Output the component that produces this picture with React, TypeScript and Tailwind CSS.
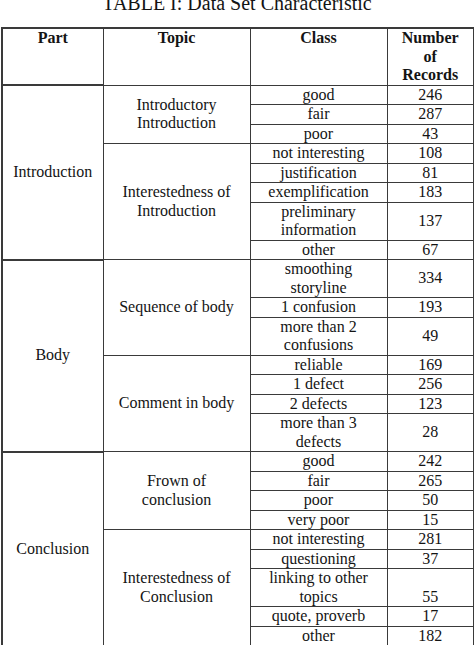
import React from 'react'

interface Row {
  part?: { label: string; span: number }
  topic?: { label: React.ReactNode; span: number }
  cls: React.ReactNode
  count: string
  bottom?: boolean
}

const rows: Row[] = [
  { part: { label: 'Introduction', span: 8 }, topic: { label: <>Introductory<br />Introduction</>, span: 3 }, cls: 'good', count: '246' },
  { cls: 'fair', count: '287' },
  { cls: 'poor', count: '43' },
  { topic: { label: <>Interestedness of<br />Introduction</>, span: 5 }, cls: 'not interesting', count: '108' },
  { cls: 'justification', count: '81' },
  { cls: 'exemplification', count: '183' },
  { cls: <>preliminary<br />information</>, count: '137' },
  { cls: 'other', count: '67' },
  { part: { label: 'Body', span: 7 }, topic: { label: 'Sequence of body', span: 3 }, cls: <>smoothing<br />storyline</>, count: '334' },
  { cls: '1 confusion', count: '193' },
  { cls: <>more than 2<br />confusions</>, count: '49' },
  { topic: { label: 'Comment in body', span: 4 }, cls: 'reliable', count: '169' },
  { cls: '1 defect', count: '256' },
  { cls: '2 defects', count: '123' },
  { cls: <>more than 3<br />defects</>, count: '28' },
  { part: { label: 'Conclusion', span: 9 }, topic: { label: <>Frown of<br />conclusion</>, span: 4 }, cls: 'good', count: '242' },
  { cls: 'fair', count: '265' },
  { cls: 'poor', count: '50' },
  { cls: 'very poor', count: '15' },
  { topic: { label: <>Interestedness of<br />Conclusion</>, span: 5 }, cls: 'not interesting', count: '281' },
  { cls: 'questioning', count: '37' },
  { cls: <>linking to other<br />topics</>, count: '55', bottom: true },
  { cls: 'quote, proverb', count: '17' },
  { cls: 'other', count: '182' },
]

const serif = { fontFamily: '"Liberation Serif", "Times New Roman", serif' }
const cell = 'border border-[#3a3a3a] p-0 text-center align-middle font-[inherit]'

export default function App() {
  return (
    <div className="w-[474px] h-[645px] overflow-hidden bg-white text-[#141414]" style={serif}>
      <div className="-mt-[7px] mb-[14px] text-center text-[20px] leading-[20px]">
        TABLE I: Data Set Characteristic
      </div>
      <table
        className="ml-[1px] w-[472px] border-collapse border-2 border-[#3a3a3a] text-[16px] leading-[18.5px] table-fixed text-[#141414]"
        style={serif}
      >
        <colgroup>
          <col className="w-[101px]" />
          <col className="w-[147px]" />
          <col className="w-[137px]" />
          <col className="w-[87px]" />
        </colgroup>
        <thead>
          <tr className="font-bold">
            <th className={cell + ' align-top'}>Part</th>
            <th className={cell + ' align-top'}>Topic</th>
            <th className={cell + ' align-top'}>Class</th>
            <th className={cell + ' align-top'}>
              Number<br />of<br />Records
            </th>
          </tr>
        </thead>
        <tbody>
          {rows.map((r, i) => (
            <tr key={i}>
              {r.part && (
                <td rowSpan={r.part.span} className={cell + ' border-t-2'}>
                  {r.part.label}
                </td>
              )}
              {r.topic && (
                <td rowSpan={r.topic.span} className={cell}>
                  {r.topic.label}
                </td>
              )}
              <td className={cell}>{r.cls}</td>
              <td className={cell + (r.bottom ? ' !align-bottom' : '')}>{r.count}</td>
            </tr>
          ))}
        </tbody>
      </table>
    </div>
  )
}
